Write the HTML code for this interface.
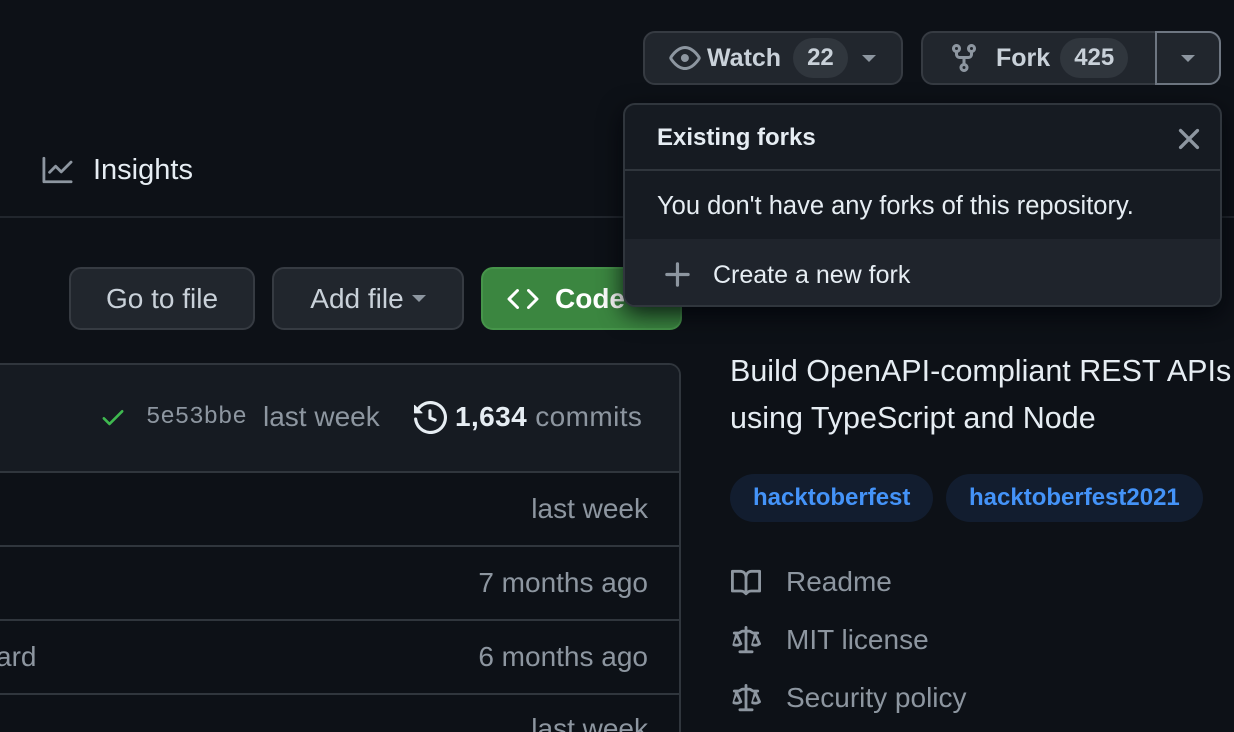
<!DOCTYPE html>
<html><head><style>
html,body{margin:0;width:1234px;height:732px;overflow:hidden}
body{background:#0d1117;font-family:"Liberation Sans",sans-serif;position:relative;color:#e6edf3}
.a{position:absolute}
.btn{position:absolute;background:#21262d;border:2px solid #363b42;border-radius:12px;box-sizing:border-box;color:#c9d1d9;font-size:25px;font-weight:bold;display:flex;align-items:center}
.cnt{background:#30363d;border-radius:24px;padding:6px 14px;font-size:24px;font-weight:bold;color:#c9d1d9}
.muted{color:#8d96a0}
.tri{width:0;height:0;border-left:7px solid transparent;border-right:7px solid transparent;border-top:7px solid #8d96a0}
</style></head><body>

<div class="btn" style="left:643px;top:31px;width:260px;height:54px;padding-left:24px">
<svg width="32" height="32" viewBox="0 0 16 16" fill="#8d96a0"><path d="M8 2c1.981 0 3.671.992 4.933 2.078 1.27 1.091 2.187 2.345 2.637 3.023a1.62 1.62 0 0 1 0 1.798c-.45.678-1.367 1.932-2.637 3.023C11.670 13.008 9.981 14 8 14c-1.981 0-3.671-.992-4.933-2.078C1.797 10.83.88 9.576.43 8.898a1.620 1.620 0 0 1 0-1.798c.45-.677 1.367-1.931 2.637-3.022C4.33 2.992 6.019 2 8 2ZM1.679 7.932a.12.12 0 0 0 0 .136c.411.622 1.241 1.750 2.366 2.717C5.176 11.758 6.527 12.5 8 12.5c1.473 0 2.825-.742 3.955-1.715 1.124-.967 1.954-2.096 2.366-2.717a.12.12 0 0 0 0-.136c-.412-.621-1.242-1.75-2.366-2.717C10.824 4.242 9.473 3.5 8 3.5c-1.473 0-2.825.742-3.955 1.715-1.124.967-1.954 2.096-2.366 2.717ZM8 10a2 2 0 1 1-.001-3.999A2 2 0 0 1 8 10Z"/></svg>
<span style="margin-left:6px">Watch</span><span class="cnt" style="margin-left:12px">22</span><span class="tri" style="margin-left:14px"></span></div>

<div class="btn" style="left:921px;top:31px;width:300px;height:54px;padding-left:25px">
<svg width="32" height="34" viewBox="0 0 16 16" fill="#8d96a0"><path d="M5 5.372v.878c0 .414.336.75.75.75h4.5a.75.75 0 0 0 .75-.75v-.878a2.25 2.25 0 1 1 1.5 0v.878a2.25 2.25 0 0 1-2.25 2.25h-1.5v2.128a2.251 2.251 0 1 1-1.5 0V8.5h-1.5A2.25 2.25 0 0 1 3.5 6.25v-.878a2.25 2.25 0 1 1 1.5 0ZM5 3.250a.75.75 0 1 0-1.5 0 .75.75 0 0 0 1.5 0Zm6.75.75a.75.75 0 1 0 0-1.5.75.75 0 0 0 0 1.5Zm-3 8.75a.75.75 0 1 0-1.5 0 .75.75 0 0 0 1.5 0Z"/></svg>
<span style="margin-left:16px">Fork</span><span class="cnt" style="margin-left:10px">425</span>
<div class="a" style="left:232px;top:-2px;width:66px;height:54px;border:2px solid #6e7681;border-radius:0 12px 12px 0;box-sizing:border-box;display:flex;align-items:center;justify-content:center"><span class="tri"></span></div>
</div>

<div class="a" style="left:0;top:216px;width:1234px;height:2px;background:#21262d"></div>
<svg class="a" style="left:41px;top:155px" width="33" height="30" viewBox="0 0 16 16" fill="#8d96a0"><path d="M1.5 1.75V13.5h13.75a.75.75 0 0 1 0 1.5H.75a.75.75 0 0 1-.75-.75V1.75a.75.75 0 0 1 1.5 0Zm14.28 2.53-5.25 5.25a.75.75 0 0 1-1.06 0L7 7.06 4.28 9.78a.751.751 0 0 1-1.042-.018.751.751 0 0 1-.018-1.042l3.25-3.25a.75.75 0 0 1 1.06 0L10 7.940l4.72-4.72a.751.751 0 0 1 1.042.018.751.751 0 0 1 .018 1.042Z"/></svg>
<div class="a" style="left:93px;top:154px;font-size:29px;color:#e6edf3">Insights</div>

<div class="btn" style="left:69px;top:267px;width:186px;height:63px;justify-content:center;font-weight:normal;font-size:28px">Go to file</div>
<div class="btn" style="left:272px;top:267px;width:192px;height:63px;justify-content:center;font-weight:normal;font-size:28px">Add file<span class="tri" style="margin-left:8px"></span></div>
<div class="btn" style="left:481px;top:267px;width:201px;height:63px;background:#3b8640;border-color:#46954a;color:#fff;padding-left:24px;font-size:28px">
<svg width="32" height="32" viewBox="0 0 16 16" fill="#fff"><path d="m11.28 3.22 4.25 4.25a.75.75 0 0 1 0 1.06l-4.25 4.25a.749.749 0 0 1-1.275-.326.749.749 0 0 1 .215-.734L13.94 8l-3.72-3.72a.749.749 0 0 1 .326-1.275.749.749 0 0 1 .734.215Zm-6.56 0a.751.751 0 0 1 1.042.018.751.751 0 0 1 .018 1.042L2.06 8l3.72 3.72a.749.749 0 0 1-.326 1.275.749.749 0 0 1-.734-.215L.47 8.530a.75.75 0 0 1 0-1.06Z"/></svg>
<span style="margin-left:16px">Code</span></div>

<div class="a" style="left:-20px;top:363px;width:701px;height:400px;border:2px solid #30363d;border-radius:12px;box-sizing:border-box"></div>
<div class="a" style="left:-18px;top:365px;width:697px;height:106px;background:#161b22;border-radius:10px 10px 0 0;border-bottom:2px solid #30363d"></div>
<div class="a" style="left:0;top:545px;width:680px;height:2px;background:#30363d"></div>
<div class="a" style="left:0;top:619px;width:680px;height:2px;background:#30363d"></div>
<div class="a" style="left:0;top:693px;width:680px;height:2px;background:#30363d"></div>
<svg class="a" style="left:98px;top:403px" width="30" height="28" viewBox="0 0 16 16" fill="#3fb950"><path d="M13.78 4.22a.75.75 0 0 1 0 1.06l-7.25 7.25a.75.75 0 0 1-1.06 0L2.22 9.28a.751.751 0 0 1 .018-1.042.751.751 0 0 1 1.042-.018L6 10.94l6.72-6.72a.75.75 0 0 1 1.06 0Z"/></svg>
<div class="a muted" style="left:146px;top:404px;font-size:24px;font-family:'Liberation Mono',monospace">5e53bbe</div>
<div class="a muted" style="left:263px;top:401px;font-size:28px">last week</div>
<svg class="a" style="left:414px;top:401px" width="33" height="33" viewBox="0 0 16 16" fill="#e6edf3"><path d="m.427 1.927 1.215 1.215a8.002 8.002 0 1 1-1.6 5.685.75.75 0 1 1 1.493-.154 6.5 6.5 0 1 0 1.18-4.458l1.358 1.358A.25.25 0 0 1 3.896 6H.25A.25.25 0 0 1 0 5.75V2.104a.25.25 0 0 1 .427-.177ZM7.75 4a.75.75 0 0 1 .75.75v2.992l2.028.812a.75.75 0 0 1-.557 1.392l-2.5-1A.751.751 0 0 1 7 8.25v-3.5A.75.75 0 0 1 7.75 4Z"/></svg>
<div class="a" style="left:455px;top:401px;font-size:28px;letter-spacing:0.4px"><b>1,634</b> <span class="muted">commits</span></div>
<div class="a muted" style="right:586px;top:493px;font-size:28px">last week</div>
<div class="a muted" style="right:586px;top:567px;font-size:28px">7 months ago</div>
<div class="a muted" style="right:586px;top:641px;font-size:28px">6 months ago</div>
<div class="a muted" style="left:-4px;top:641px;font-size:28px">ard</div>
<div class="a muted" style="right:586px;top:713px;font-size:28px">last week</div>

<div class="a" style="left:730px;top:348px;font-size:30.5px;line-height:47px;white-space:nowrap">Build OpenAPI-compliant REST APIs<br>using TypeScript and Node</div>
<div class="a" style="left:730px;top:474px;height:48px;padding:0 23px;background:#121d2f;border-radius:24px;color:#4493f8;font-size:24px;font-weight:bold;line-height:48px">hacktoberfest</div>
<div class="a" style="left:946px;top:474px;height:48px;padding:0 23px;background:#121d2f;border-radius:24px;color:#4493f8;font-size:24px;font-weight:bold;line-height:48px">hacktoberfest2021</div>
<svg class="a" style="left:730px;top:568px" width="32" height="30" viewBox="0 0 16 16" fill="#8d96a0"><path d="M0 1.75A.75.75 0 0 1 .75 1h4.253c1.227 0 2.317.59 3 1.501A3.743 3.743 0 0 1 11.006 1h4.245a.75.75 0 0 1 .75.75v10.5a.75.75 0 0 1-.75.75h-4.507a2.25 2.25 0 0 0-1.591.659l-.622.621a.75.75 0 0 1-1.060 0l-.622-.621A2.25 2.25 0 0 0 5.258 13H.75a.75.75 0 0 1-.75-.75Zm7.251 10.324.004-5.073-.002-2.253A2.25 2.25 0 0 0 5.003 2.5H1.5v9h3.757a3.75 3.75 0 0 1 1.994.574ZM8.755 4.75l-.004 7.322a3.752 3.752 0 0 1 1.992-.572H14.5v-9h-3.495a2.25 2.25 0 0 0-2.25 2.25Z"/></svg>
<div class="a muted" style="left:786px;top:566px;font-size:28px">Readme</div>
<svg class="a" style="left:730px;top:626px" width="32" height="30" viewBox="0 0 16 16" fill="#8d96a0"><path d="M8.75.75V2h.985c.304 0 .603.08.867.231l1.29.736c.038.022.08.033.124.033h2.234a.75.75 0 0 1 0 1.5h-.427l2.111 4.692a.75.75 0 0 1-.154.838C14.556 10.78 13.88 11 13 11s-1.556-.22-2.023-.454a.75.75 0 0 1-.154-.838L12.178 4.5h-.162c-.305 0-.604-.079-.868-.231l-1.29-.736a.245.245 0 0 0-.124-.033H8.75V13h2.5a.75.75 0 0 1 0 1.5h-6.5a.75.75 0 0 1 0-1.5h2.5V3.5h-.984a.245.245 0 0 0-.124.033l-1.289.737c-.265.15-.564.23-.869.23h-.162l2.112 4.692a.75.75 0 0 1-.154.838C4.556 10.78 3.88 11 3 11s-1.556-.22-2.023-.454a.75.75 0 0 1-.154-.838L2.178 4.5H1.75a.75.75 0 0 1 0-1.5h2.234a.249.249 0 0 0 .125-.033l1.288-.737c.265-.15.564-.23.869-.23h.984V.75a.75.75 0 0 1 1.5 0Zm2.945 8.477c.285.135.718.273 1.305.273s1.02-.138 1.305-.273L13 6.327Zm-10 0c.285.135.718.273 1.305.273s1.02-.138 1.305-.273L3 6.327Z"/></svg>
<div class="a muted" style="left:786px;top:624px;font-size:28px">MIT license</div>
<svg class="a" style="left:730px;top:684px" width="32" height="30" viewBox="0 0 16 16" fill="#8d96a0"><path d="M8.75.75V2h.985c.304 0 .603.08.867.231l1.29.736c.038.022.08.033.124.033h2.234a.75.75 0 0 1 0 1.5h-.427l2.111 4.692a.75.75 0 0 1-.154.838C14.556 10.78 13.88 11 13 11s-1.556-.22-2.023-.454a.75.75 0 0 1-.154-.838L12.178 4.5h-.162c-.305 0-.604-.079-.868-.231l-1.29-.736a.245.245 0 0 0-.124-.033H8.75V13h2.5a.75.75 0 0 1 0 1.5h-6.5a.75.75 0 0 1 0-1.5h2.5V3.5h-.984a.245.245 0 0 0-.124.033l-1.289.737c-.265.15-.564.23-.869.23h-.162l2.112 4.692a.75.75 0 0 1-.154.838C4.556 10.78 3.88 11 3 11s-1.556-.22-2.023-.454a.75.75 0 0 1-.154-.838L2.178 4.5H1.75a.75.75 0 0 1 0-1.5h2.234a.249.249 0 0 0 .125-.033l1.288-.737c.265-.15.564-.23.869-.23h.984V.75a.75.75 0 0 1 1.5 0Zm2.945 8.477c.285.135.718.273 1.305.273s1.02-.138 1.305-.273L13 6.327Zm-10 0c.285.135.718.273 1.305.273s1.02-.138 1.305-.273L3 6.327Z"/></svg>
<div class="a muted" style="left:786px;top:682px;font-size:28px">Security policy</div>

<div class="a" style="left:623px;top:103px;width:599px;height:204px;background:#161b22;border:2px solid #30363d;border-radius:12px;box-sizing:border-box;overflow:hidden;box-shadow:0 8px 24px rgba(1,4,9,.8)">
<div class="a" style="left:32px;top:19px;font-size:24px;font-weight:bold;color:#e6edf3">Existing forks</div>
<svg class="a" style="left:546px;top:16px" width="36" height="36" viewBox="0 0 16 16" fill="#8d96a0"><path d="M3.72 3.72a.75.75 0 0 1 1.06 0L8 6.94l3.22-3.22a.749.749 0 0 1 1.275.326.749.749 0 0 1-.215.734L9.06 8l3.22 3.22a.749.749 0 0 1-.326 1.275.749.749 0 0 1-.734-.215L8 9.06l-3.22 3.22a.751.751 0 0 1-1.042-.018.751.751 0 0 1-.018-1.042L6.94 8 3.72 4.78a.75.75 0 0 1 0-1.06Z"/></svg>
<div class="a" style="left:0;top:64px;width:100%;height:2px;background:#30363d"></div>
<div class="a" style="left:32px;top:87px;font-size:25.5px;color:#e6edf3">You don't have any forks of this repository.</div>
<div class="a" style="left:0;top:134px;width:100%;height:70px;background:#1f242c"></div>
<svg class="a" style="left:36px;top:153px" width="34" height="34" viewBox="0 0 16 16" fill="#8d96a0"><path d="M7.75 2a.75.75 0 0 1 .75.75V7h4.25a.75.75 0 0 1 0 1.5H8.5v4.25a.75.75 0 0 1-1.5 0V8.5H2.75a.75.75 0 0 1 0-1.5H7V2.75A.75.75 0 0 1 7.75 2Z"/></svg>
<div class="a" style="left:88px;top:156px;font-size:25px;color:#e6edf3">Create a new fork</div>
</div>
</body></html>
